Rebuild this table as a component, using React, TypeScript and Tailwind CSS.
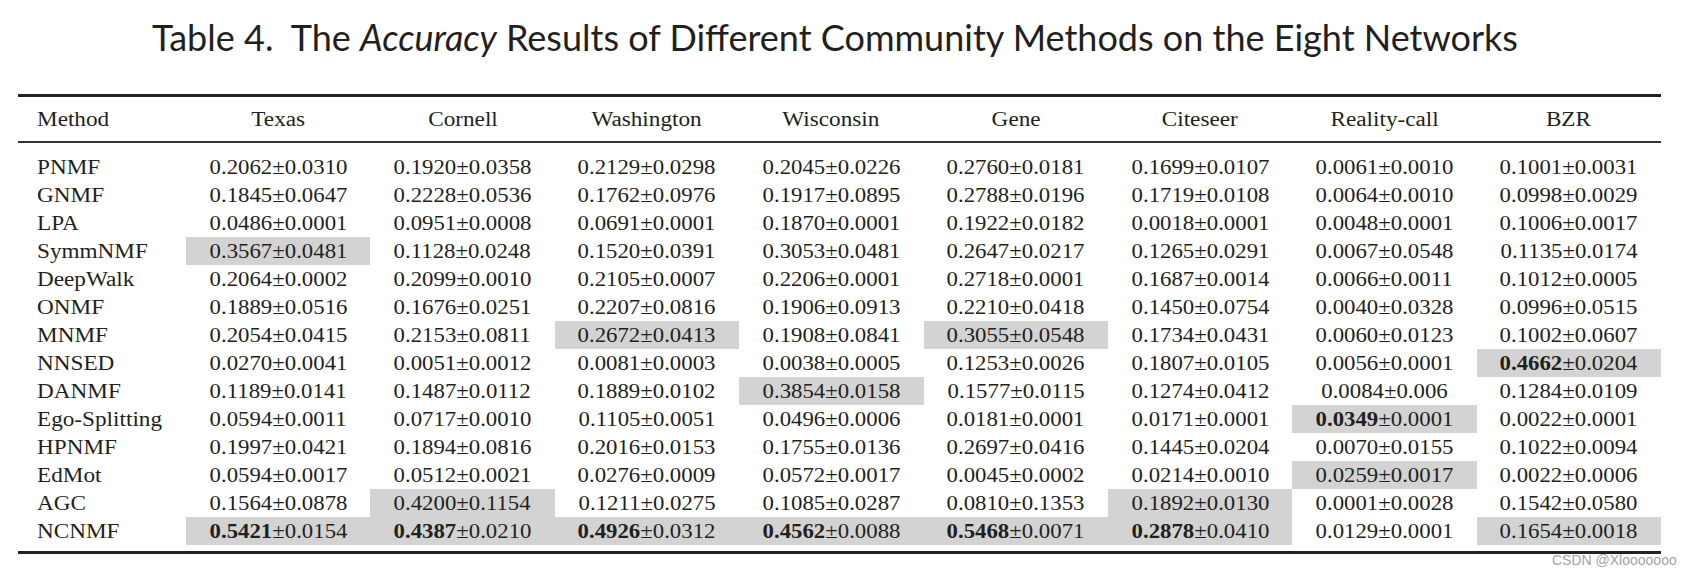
import React from "react";

const columns = [
  "Texas",
  "Cornell",
  "Washington",
  "Wisconsin",
  "Gene",
  "Citeseer",
  "Reality-call",
  "BZR",
];

// "#" = shaded cell, "**x**" = bold part
const rows: [string, string[]][] = [
  ["PNMF", ["0.2062±0.0310", "0.1920±0.0358", "0.2129±0.0298", "0.2045±0.0226", "0.2760±0.0181", "0.1699±0.0107", "0.0061±0.0010", "0.1001±0.0031"]],
  ["GNMF", ["0.1845±0.0647", "0.2228±0.0536", "0.1762±0.0976", "0.1917±0.0895", "0.2788±0.0196", "0.1719±0.0108", "0.0064±0.0010", "0.0998±0.0029"]],
  ["LPA", ["0.0486±0.0001", "0.0951±0.0008", "0.0691±0.0001", "0.1870±0.0001", "0.1922±0.0182", "0.0018±0.0001", "0.0048±0.0001", "0.1006±0.0017"]],
  ["SymmNMF", ["#0.3567±0.0481", "0.1128±0.0248", "0.1520±0.0391", "0.3053±0.0481", "0.2647±0.0217", "0.1265±0.0291", "0.0067±0.0548", "0.1135±0.0174"]],
  ["DeepWalk", ["0.2064±0.0002", "0.2099±0.0010", "0.2105±0.0007", "0.2206±0.0001", "0.2718±0.0001", "0.1687±0.0014", "0.0066±0.0011", "0.1012±0.0005"]],
  ["ONMF", ["0.1889±0.0516", "0.1676±0.0251", "0.2207±0.0816", "0.1906±0.0913", "0.2210±0.0418", "0.1450±0.0754", "0.0040±0.0328", "0.0996±0.0515"]],
  ["MNMF", ["0.2054±0.0415", "0.2153±0.0811", "#0.2672±0.0413", "0.1908±0.0841", "#0.3055±0.0548", "0.1734±0.0431", "0.0060±0.0123", "0.1002±0.0607"]],
  ["NNSED", ["0.0270±0.0041", "0.0051±0.0012", "0.0081±0.0003", "0.0038±0.0005", "0.1253±0.0026", "0.1807±0.0105", "0.0056±0.0001", "#**0.4662**±0.0204"]],
  ["DANMF", ["0.1189±0.0141", "0.1487±0.0112", "0.1889±0.0102", "#0.3854±0.0158", "0.1577±0.0115", "0.1274±0.0412", "0.0084±0.006", "0.1284±0.0109"]],
  ["Ego-Splitting", ["0.0594±0.0011", "0.0717±0.0010", "0.1105±0.0051", "0.0496±0.0006", "0.0181±0.0001", "0.0171±0.0001", "#**0.0349**±0.0001", "0.0022±0.0001"]],
  ["HPNMF", ["0.1997±0.0421", "0.1894±0.0816", "0.2016±0.0153", "0.1755±0.0136", "0.2697±0.0416", "0.1445±0.0204", "0.0070±0.0155", "0.1022±0.0094"]],
  ["EdMot", ["0.0594±0.0017", "0.0512±0.0021", "0.0276±0.0009", "0.0572±0.0017", "0.0045±0.0002", "0.0214±0.0010", "#0.0259±0.0017", "0.0022±0.0006"]],
  ["AGC", ["0.1564±0.0878", "#0.4200±0.1154", "0.1211±0.0275", "0.1085±0.0287", "0.0810±0.1353", "#0.1892±0.0130", "0.0001±0.0028", "0.1542±0.0580"]],
  ["NCNMF", ["#**0.5421**±0.0154", "#**0.4387**±0.0210", "#**0.4926**±0.0312", "#**0.4562**±0.0088", "#**0.5468**±0.0071", "#**0.2878**±0.0410", "0.0129±0.0001", "#0.1654±0.0018"]],
];

function Cell({ value }: { value: string }) {
  const shaded = value.startsWith("#");
  const text = shaded ? value.slice(1) : value;
  const parts = text.split("**");

  return (
    <div
      className={
        shaded
          ? "flex items-center justify-center bg-[#d3d3d3]"
          : "flex items-center justify-center"
      }
    >
      <span className="inline-block scale-x-[1.14] whitespace-pre">
        {parts.length === 3 ? (
          <>
            <b className="font-bold">{parts[1]}</b>
            {parts[2]}
          </>
        ) : (
          text
        )}
      </span>
    </div>
  );
}

export default function App() {
  return (
    <div className="relative h-[576px] w-[1690px] overflow-hidden bg-white text-[#231f20]">
      <div className="h-[94px] pt-[19px] pr-[20px] text-center font-['Lato',sans-serif] text-[36px] leading-none whitespace-pre">
        Table 4.  The <i className="italic">Accuracy</i> Results of Different Community Methods on the Eight Networks
      </div>

      <div className="ml-[18px] w-[1643px] border-y-[3px] border-[#222] font-['Liberation_Serif',serif] text-[20px] leading-none">
        <div className="grid h-[46px] grid-cols-[168px_repeat(8,minmax(0,1fr))] border-b-2 border-[#333]">
          <div className="flex items-center pl-[19px]">
            <span className="inline-block origin-left scale-x-[1.16]">Method</span>
          </div>
          {columns.map((c) => (
            <div key={c} className="flex items-center justify-center">
              <span className="inline-block scale-x-[1.16]">{c}</span>
            </div>
          ))}
        </div>

        <div className="pt-[10px] pb-[6px]">
          {rows.map(([name, values]) => (
            <div
              key={name}
              className="grid h-[28px] grid-cols-[168px_repeat(8,minmax(0,1fr))]"
            >
              <div className="flex items-center pl-[19px]">
                <span className="inline-block origin-left scale-x-[1.16]">{name}</span>
              </div>
              {values.map((v, i) => (
                <Cell key={i} value={v} />
              ))}
            </div>
          ))}
        </div>
      </div>

      <div className="absolute left-[1552px] top-[553px] font-['Liberation_Sans',sans-serif] text-[14px] leading-none text-[#a3a3a3]">
        CSDN @Xlooooooo
      </div>
    </div>
  );
}
